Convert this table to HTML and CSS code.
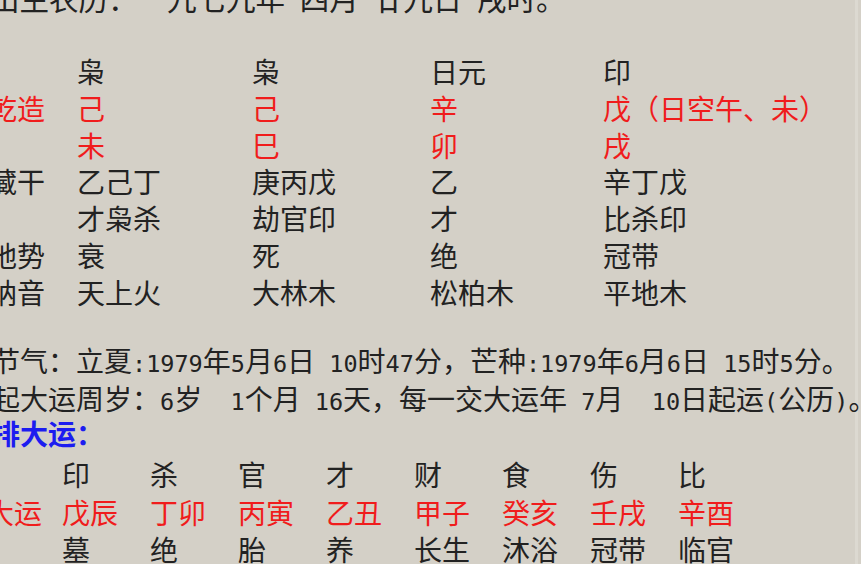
FILE: index.html
```html
<!DOCTYPE html>
<html lang="zh-CN">
<head>
<meta charset="utf-8">
<title>八字排盘</title>
<link rel="stylesheet" href="styles.css">
</head>
<body>
<div class="page">
  <p class="line top">出生农历：一九七九年<span class="h t"> </span>四月<span class="h t"> </span>廿九日<span class="h t"> </span>戌时。</p>
  <div class="chart">
    <span></span><span>枭</span><span>枭</span><span>日元</span><span>印</span>
    <span class="red">乾造</span><span class="red">己</span><span class="red">己</span><span class="red">辛</span><span class="red">戊（日空午、未）</span>
    <span></span><span class="red">未</span><span class="red">巳</span><span class="red">卯</span><span class="red">戌</span>
    <span>藏干</span><span>乙己丁</span><span>庚丙戊</span><span>乙</span><span>辛丁戊</span>
    <span></span><span>才枭杀</span><span>劫官印</span><span>才</span><span>比杀印</span>
    <span>地势</span><span>衰</span><span>死</span><span>绝</span><span>冠带</span>
    <span>纳音</span><span>天上火</span><span>大林木</span><span>松柏木</span><span>平地木</span>
  </div>
  <div class="notes">
    <p class="line">节气：立夏<span class="h">:1979</span>年<span class="h">5</span>月<span class="h">6</span>日<span class="h"> 10</span>时<span class="h">47</span>分，芒种<span class="h">:1979</span>年<span class="h">6</span>月<span class="h">6</span>日<span class="h"> 15</span>时<span class="h">5</span>分。</p>
    <p class="line">起大运周岁：<span class="h">6</span>岁<span class="h">  1</span>个月<span class="h"> 16</span>天，每一交大运年<span class="h"> 7</span>月<span class="h">  10</span>日起运<span class="h">(</span>公历<span class="h">)</span>。</p>
    <p class="line blue">排大运：</p>
  </div>
  <div class="dayun">
    <span></span><span>印</span><span>杀</span><span>官</span><span>才</span><span>财</span><span>食</span><span>伤</span><span>比</span>
    <span class="red">大运</span><span class="red">戊辰</span><span class="red">丁卯</span><span class="red">丙寅</span><span class="red">乙丑</span><span class="red">甲子</span><span class="red">癸亥</span><span class="red">壬戌</span><span class="red">辛酉</span>
    <span></span><span>墓</span><span>绝</span><span>胎</span><span>养</span><span>长生</span><span>沐浴</span><span>冠带</span><span>临官</span>
  </div>
</div>
</body>
</html>
```

FILE: styles.css
```css
html, body {
  margin: 0;
  padding: 0;
  background: #d4d0c7;
}
body {
  width: 861px;
  height: 564px;
  overflow: hidden;
  font-family: "Noto Sans CJK SC", "Noto Sans", sans-serif;
  font-size: 28px;
  font-weight: 400;
  color: #222222;
}
.page {
  margin-top: -21px;
  border-right: 3px solid #dcd9d1;
  height: 600px;
  width: 855px;
}
.line {
  margin: 0;
  white-space: pre;
  line-height: 37.6px;
}
.top {
  font-size: 29.5px;
  line-height: 36.8px;
  margin-left: -10px;
  margin-bottom: 36.8px;
}
.h {
  font-family: "DejaVu Sans Mono", "Liberation Mono", monospace;
  font-size: 23.5px;
  line-height: 0;
  white-space: pre;
}
.h.t {
  font-size: 24.6px;
}
.chart {
  display: grid;
  grid-template-columns: 88px 175px 178px 173px 1fr;
  grid-auto-rows: 36.8px;
  align-items: center;
  margin-left: -11px;
  white-space: nowrap;
}
.notes {
  margin-top: 32px;
  margin-left: -8px;
}
.red {
  color: #f01c1c;
}
.blue {
  color: #1c1cf0;
  font-weight: 700;
  line-height: 33px;
}
.dayun {
  display: grid;
  grid-template-columns: 76px repeat(8, 88px);
  grid-auto-rows: 37.6px;
  align-items: center;
  margin-left: -14px;
  margin-top: 5px;
  white-space: nowrap;
}
```
